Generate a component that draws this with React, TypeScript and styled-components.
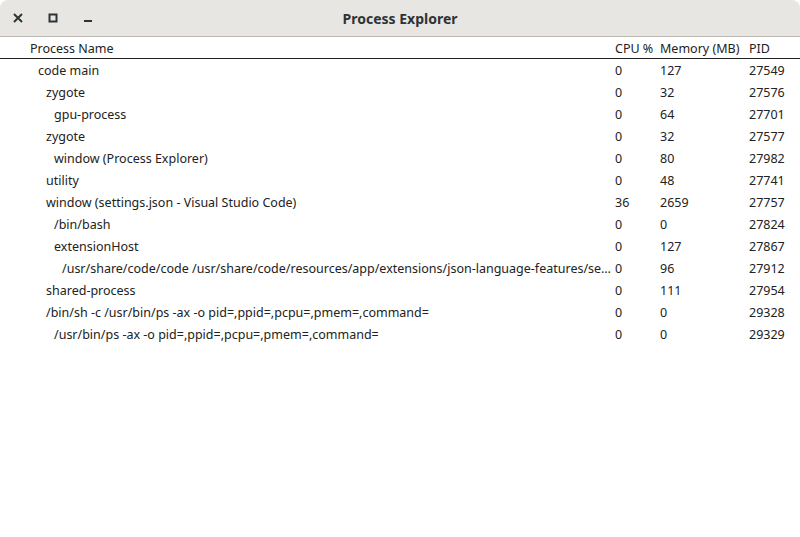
import React from "react";
import styled, { createGlobalStyle } from "styled-components";

const GlobalStyle = createGlobalStyle`
  html, body {
    margin: 0;
    padding: 0;
    background: #ffffff;
  }
  body {
    font-family: "Noto Sans", "Open Sans", sans-serif;
  }
`;

const Window = styled.div`
  width: 800px;
  height: 537px;
  display: flex;
  flex-direction: column;
  background: #ffffff;
  overflow: hidden;
`;

// Title bar
const TitleBar = styled.div`
  height: 36px;
  display: grid;
  grid-template-columns: 1fr auto 1fr;
  align-items: center;
  background: #e8e6e3;
  border-bottom: 1px solid #bdb8b2;
  border-radius: 8px 8px 0 0;
`;

const Controls = styled.div`
  display: flex;
  align-items: center;
  padding-left: 9px;
`;

const ControlButton = styled.div`
  width: 18px;
  height: 18px;
  margin-right: 17px;
  display: flex;
  align-items: center;
  justify-content: center;
  color: #2e3436;
`;

const Title = styled.div`
  font-size: 14px;
  font-weight: 700;
  color: #2e3436;
`;

// Table
const Table = styled.div`
  display: flex;
  flex-direction: column;
  font-size: 12.5px;
  color: #222222;
`;

const Row = styled.div<{ $header?: boolean }>`
  display: grid;
  grid-template-columns: 585px 45px 89px 51px;
  padding-left: 30px;
  padding-top: ${(p) => (p.$header ? "1px" : "0")};
  height: 22px;
  box-sizing: border-box;
  align-items: center;
  border-bottom: ${(p) => (p.$header ? "1px solid #222222" : "none")};
`;

const NameCell = styled.div<{ $depth: number }>`
  padding-left: ${(p) => p.$depth * 8}px;
  padding-right: 4px;
  white-space: nowrap;
  overflow: hidden;
  text-overflow: ellipsis;
`;

const Cell = styled.div`
  white-space: nowrap;
  overflow: hidden;
`;

type Proc = { name: string; depth: number; cpu: string; mem: string; pid: string };

const processes: Proc[] = [
  { name: "code main", depth: 1, cpu: "0", mem: "127", pid: "27549" },
  { name: "zygote", depth: 2, cpu: "0", mem: "32", pid: "27576" },
  { name: "gpu-process", depth: 3, cpu: "0", mem: "64", pid: "27701" },
  { name: "zygote", depth: 2, cpu: "0", mem: "32", pid: "27577" },
  { name: "window (Process Explorer)", depth: 3, cpu: "0", mem: "80", pid: "27982" },
  { name: "utility", depth: 2, cpu: "0", mem: "48", pid: "27741" },
  { name: "window (settings.json - Visual Studio Code)", depth: 2, cpu: "36", mem: "2659", pid: "27757" },
  { name: "/bin/bash", depth: 3, cpu: "0", mem: "0", pid: "27824" },
  { name: "extensionHost", depth: 3, cpu: "0", mem: "127", pid: "27867" },
  {
    name: "/usr/share/code/code /usr/share/code/resources/app/extensions/json-language-features/server/dist/node/jsonServerMain --node-ipc --clientProcessId=27867",
    depth: 4,
    cpu: "0",
    mem: "96",
    pid: "27912",
  },
  { name: "shared-process", depth: 2, cpu: "0", mem: "111", pid: "27954" },
  { name: "/bin/sh -c /usr/bin/ps -ax -o pid=,ppid=,pcpu=,pmem=,command=", depth: 2, cpu: "0", mem: "0", pid: "29328" },
  { name: "/usr/bin/ps -ax -o pid=,ppid=,pcpu=,pmem=,command=", depth: 3, cpu: "0", mem: "0", pid: "29329" },
];

const App: React.FC = () => {
  return (
    <>
      <GlobalStyle />
      <Window>
        <TitleBar>
          <Controls>
            <ControlButton>
              <svg width="10" height="10" viewBox="0 0 10 10">
                <path d="M1 1 L9 9 M9 1 L1 9" stroke="currentColor" strokeWidth="2" />
              </svg>
            </ControlButton>
            <ControlButton>
              <svg width="10" height="10" viewBox="0 0 10 10">
                <rect x="1.5" y="1.5" width="7" height="7" fill="none" stroke="currentColor" strokeWidth="2" />
              </svg>
            </ControlButton>
            <ControlButton>
              <svg width="10" height="10" viewBox="0 0 10 10">
                <rect x="1" y="7" width="8" height="2" fill="currentColor" />
              </svg>
            </ControlButton>
          </Controls>
          <Title>Process Explorer</Title>
          <div />
        </TitleBar>
        <Table>
          <Row $header>
            <NameCell $depth={0}>Process Name</NameCell>
            <Cell>CPU %</Cell>
            <Cell>Memory (MB)</Cell>
            <Cell>PID</Cell>
          </Row>
          {processes.map((p) => (
            <Row key={p.pid}>
              <NameCell $depth={p.depth}>{p.name}</NameCell>
              <Cell>{p.cpu}</Cell>
              <Cell>{p.mem}</Cell>
              <Cell>{p.pid}</Cell>
            </Row>
          ))}
        </Table>
      </Window>
    </>
  );
};

export default App;
